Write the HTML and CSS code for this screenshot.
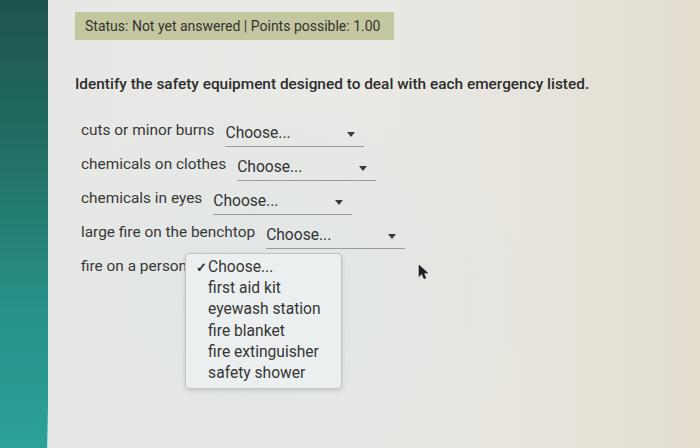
FILE: index.html
```html
<!DOCTYPE html>
<html>
<head>
<meta charset="utf-8">
<link rel="stylesheet" href="styles.css">
</head>
<body>
<div class="screen">
  <div class="sidebar"></div>
  <div class="main">
    <div class="status">Status: Not yet answered | Points possible: 1.00</div>
    <p class="question">Identify the safety equipment designed to deal with each emergency listed.</p>
    <div class="rows">
      <div class="row">
        <span class="label">cuts or minor burns</span>
        <div class="select"><span class="value">Choose...</span><span class="arrow"></span></div>
      </div>
      <div class="row">
        <span class="label">chemicals on clothes</span>
        <div class="select"><span class="value">Choose...</span><span class="arrow"></span></div>
      </div>
      <div class="row">
        <span class="label">chemicals in eyes</span>
        <div class="select"><span class="value">Choose...</span><span class="arrow"></span></div>
      </div>
      <div class="row">
        <span class="label">large fire on the benchtop</span>
        <div class="select"><span class="value">Choose...</span><span class="arrow"></span></div>
      </div>
      <div class="row">
        <span class="label">fire on a person</span>
        <div class="menu-anchor">
          <ul class="menu">
            <li class="selected"><span class="check">✓</span>Choose...</li>
            <li>first aid kit</li>
            <li>eyewash station</li>
            <li>fire blanket</li>
            <li>fire extinguisher</li>
            <li>safety shower</li>
          </ul>
        </div>
      </div>
    </div>
    <svg class="cursor" width="11" height="16" viewBox="0 0 11 16">
      <path d="M1 1 L1 12.5 L3.8 9.8 L6 14.8 L7.9 14 L5.8 9.1 L9.8 9.1 Z" fill="#1c1c22" stroke="#2a2a30" stroke-width="0.6"/>
    </svg>
  </div>
</div>
</body>
</html>
```

FILE: styles.css
```css
html, body {
  margin: 0;
  padding: 0;
}
body {
  width: 700px;
  height: 448px;
  overflow: hidden;
  font-family: Roboto, "Liberation Sans", sans-serif;
  color: #3a3a3a;
}
.screen {
  display: flex;
  width: 700px;
  height: 448px;
}
.sidebar {
  width: 55px;
  flex: none;
  background: linear-gradient(to bottom, #1d544c 0%, #227066 35%, #28928a 70%, #2ba197 100%);
  clip-path: polygon(0 0, 100% 0, 86% 100%, 0 100%);
  margin-right: -7px;
}
.main {
  position: relative;
  flex: 1;
  padding: 12px 0 0 27px;
  background:
    radial-gradient(ellipse 260px 200px at 230px 300px, rgba(205, 225, 232, 0.35), rgba(205, 225, 232, 0) 100%),
    linear-gradient(to right, #e7e8e5 0%, #e9e9e6 45%, #e7e4dc 75%, #e2ddcf 100%);
}
.status {
  width: 319px;
  height: 28px;
  box-sizing: border-box;
  padding: 0 10px;
  background: #c4c69f;
  font-size: 14px;
  line-height: 28px;
  color: #333330;
}
.question {
  margin: 34px 0 0 0;
  font-size: 15.4px;
  line-height: 20px;
  font-weight: 500;
  color: #2d2d2d;
}
.rows {
  margin-top: 26px;
  padding-left: 6px;
}
.row {
  display: flex;
  align-items: flex-start;
  height: 34px;
  font-size: 15.4px;
}
.label {
  line-height: 20px;
  color: #383838;
}
.select {
  position: relative;
  margin-left: 11px;
  width: 139px;
  height: 27px;
  box-sizing: border-box;
  border-bottom: 1px solid #9a9a98;
  padding-top: 3px;
  line-height: 20px;
  font-size: 15.6px;
  color: #333;
}
.arrow {
  position: absolute;
  right: 9px;
  top: 12px;
  width: 0;
  height: 0;
  border-left: 4px solid transparent;
  border-right: 4px solid transparent;
  border-top: 5px solid #3a3a3a;
}
.menu-anchor {
  position: relative;
}
.menu {
  position: absolute;
  left: -2px;
  top: -3px;
  width: 157px;
  height: 136px;
  box-sizing: border-box;
  margin: 0;
  padding: 3px 0 0 22px;
  list-style: none;
  background: rgba(236, 240, 240, 0.9);
  border: 1px solid #c2c4c4;
  border-radius: 4px;
  box-shadow: 0 2px 5px rgba(0, 0, 0, 0.12);
  z-index: 2;
}
.menu li {
  position: relative;
  font-size: 15.6px;
  line-height: 21.2px;
  color: #363636;
}
.check {
  position: absolute;
  left: -12px;
  top: 0;
  font-size: 13px;
  font-weight: 700;
}
.cursor {
  position: absolute;
  left: 370px;
  top: 264px;
}
```
